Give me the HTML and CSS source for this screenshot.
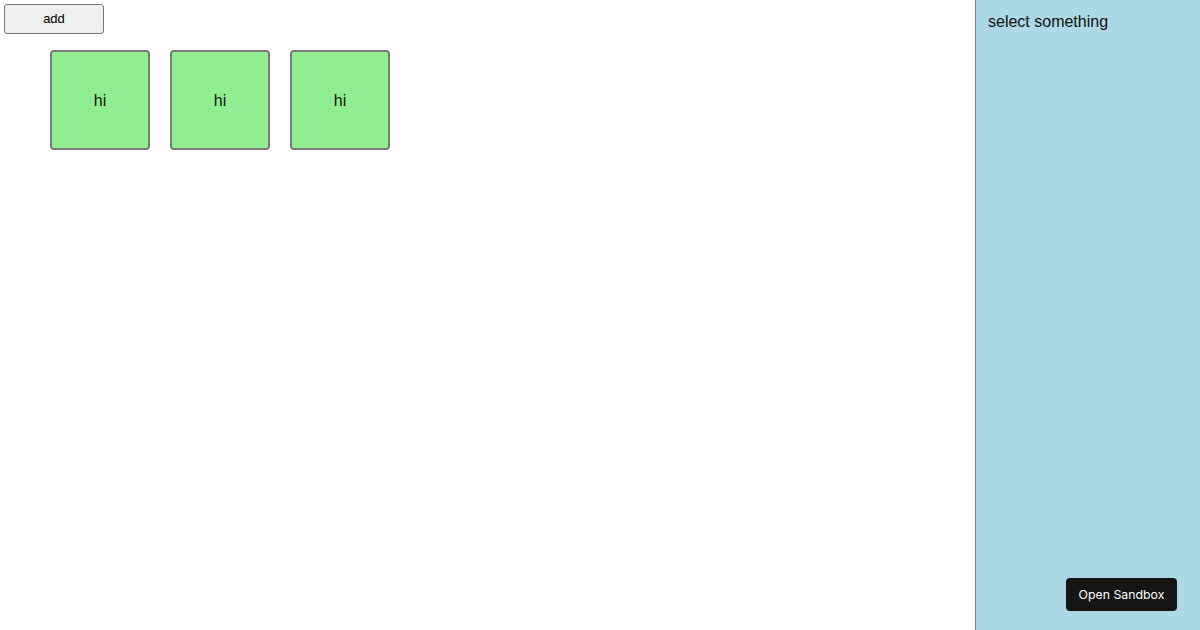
FILE: index.html
```html
<!DOCTYPE html>
<html>
<head>
<meta charset="utf-8">
<link rel="stylesheet" href="styles.css">
</head>
<body>
<div class="app">
  <main class="canvas">
    <button class="add-btn">add</button>
    <div class="boxes">
      <div class="box">hi</div>
      <div class="box">hi</div>
      <div class="box">hi</div>
    </div>
  </main>
  <aside class="sidebar">select something</aside>
</div>
<a class="sandbox-btn">Open Sandbox</a>
</body>
</html>
```
FILE: styles.css
```css
html, body {
  margin: 0;
  padding: 0;
  height: 100%;
  background: #fff;
  font-family: "Liberation Sans", Arial, sans-serif;
  color: #111;
}
.app {
  display: flex;
  height: 630px;
}
.canvas {
  flex: 1;
  padding: 4px;
}
.add-btn {
  display: block;
  width: 100px;
  height: 30px;
  box-sizing: border-box;
  background: #efefef;
  border: 1px solid #767676;
  border-radius: 3px;
  font-family: "Liberation Sans", Arial, sans-serif;
  font-size: 13px;
  color: #000;
  padding: 0 0 2px 0;
}
.boxes {
  display: flex;
  gap: 20px;
  margin-top: 16px;
  padding-left: 46px;
}
.box {
  width: 100px;
  height: 100px;
  box-sizing: border-box;
  background: #90ee90;
  border: 2px solid #7a7a7a;
  border-radius: 4px;
  display: flex;
  align-items: center;
  justify-content: center;
  font-size: 16px;
  padding-top: 2px;
}
.sidebar {
  flex: 0 0 225px;
  box-sizing: border-box;
  background: #add8e6;
  border-left: 1px solid #808080;
  padding: 13px 12px;
  font-size: 16px;
}
.sandbox-btn {
  position: fixed;
  right: 23px;
  bottom: 19px;
  width: 111px;
  height: 33px;
  box-sizing: border-box;
  background: #151515;
  border-radius: 4px;
  color: #fff;
  font-family: Inter, "Liberation Sans", sans-serif;
  font-size: 12.3px;
  display: flex;
  align-items: center;
  justify-content: center;
}
```
